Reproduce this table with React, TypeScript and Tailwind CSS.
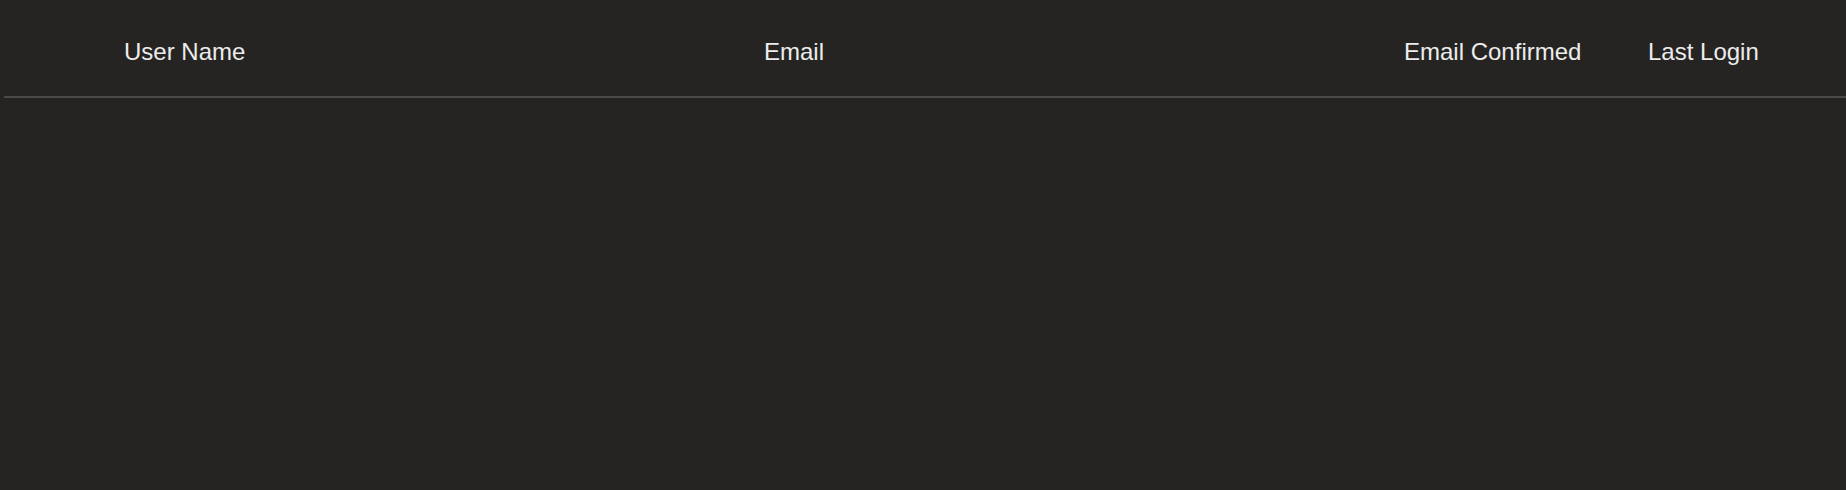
import React from 'react';

const columns = [
  { label: 'User Name', className: 'w-[760px] pl-[120px]' },
  { label: 'Email', className: 'w-[640px]' },
  { label: 'Email Confirmed', className: 'w-[244px]' },
  { label: 'Last Login', className: 'flex-1' },
];

const App = () => {
  return (
    <div className="h-[490px] w-full overflow-hidden bg-[#252422] font-['Liberation_Sans',Arial,sans-serif]">
      <div className="pl-[4px]">
        {/* Table header */}
        <div className="flex h-[98px] border-b-2 border-[#4a4948] pt-[38px]">
          {columns.map((col) => (
            <div key={col.label} className={col.className}>
              <span className="text-[24px] leading-[28px] text-[#ececec]">{col.label}</span>
            </div>
          ))}
        </div>
      </div>
    </div>
  );
};

export default App;
